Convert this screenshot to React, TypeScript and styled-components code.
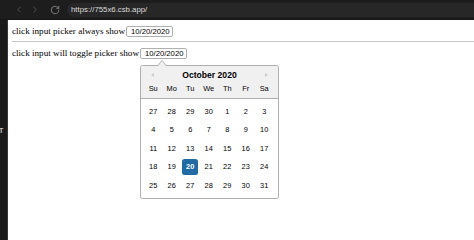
import React from 'react'
import styled, { createGlobalStyle } from 'styled-components'
import { ChevronLeft, ChevronRight, RotateCw } from 'lucide-react'

const weekDays = ['Su', 'Mo', 'Tu', 'We', 'Th', 'Fr', 'Sa']

const weeks = [
  [27, 28, 29, 30, 1, 2, 3],
  [4, 5, 6, 7, 8, 9, 10],
  [11, 12, 13, 14, 15, 16, 17],
  [18, 19, 20, 21, 22, 23, 24],
  [25, 26, 27, 28, 29, 30, 31],
]

const DateInput: React.FC = () => <Input readOnly value="10/20/2020" />

const Calendar: React.FC = () => (
  <Popper>
    <Arrow />
    <Header>
      <NavArrow $dir="prev" />
      <NavArrow $dir="next" />
      <MonthTitle>October 2020</MonthTitle>
      <Week>
        {weekDays.map(d => (
          <DayName key={d}>{d}</DayName>
        ))}
      </Week>
    </Header>
    <Month>
      {weeks.map((week, i) => (
        <Week key={i}>
          {week.map((day, j) => (
            <Day key={j} $selected={i === 3 && day === 20}>
              {day}
            </Day>
          ))}
        </Week>
      ))}
    </Month>
  </Popper>
)

const App: React.FC = () => (
  <>
    <GlobalStyle />
    <Frame>
      <TopBar>
        <NavButton $dim $space={6}>
          <ChevronLeft size={11} strokeWidth={2} />
        </NavButton>
        <NavButton $dim $space={10}>
          <ChevronRight size={11} strokeWidth={2} />
        </NavButton>
        <NavButton $space={7}>
          <RotateCw size={10} strokeWidth={2} />
        </NavButton>
        <Address>https://755x6.csb.app/</Address>
      </TopBar>
      <Body>
        <SideStrip>
          <Glyph>T</Glyph>
        </SideStrip>
        <Page>
          <Row>
            click input picker always show
            <DateInput />
          </Row>
          <Rule />
          <Row>
            click input will toggle picker show
            <Anchor>
              <DateInput />
              <Calendar />
            </Anchor>
          </Row>
        </Page>
      </Body>
    </Frame>
  </>
)

const GlobalStyle = createGlobalStyle`
  html, body {
    margin: 0;
    padding: 0;
    height: 100%;
  }
  body {
    overflow: hidden;
    background: #1c1c1c;
  }
  * {
    box-sizing: border-box;
  }
`

const Frame = styled.div`
  display: flex;
  flex-direction: column;
  width: 100vw;
  height: 100vh;
  min-height: 216px;
  overflow: hidden;
`

const TopBar = styled.div`
  display: flex;
  align-items: center;
  height: 20px;
  flex-shrink: 0;
  padding: 3px 0 3px 14px;
  background: #1d1d1d;
  border-bottom: 1px solid #161616;
`

const NavButton = styled.span<{ $dim?: boolean; $space: number }>`
  display: flex;
  align-items: center;
  justify-content: center;
  width: 10px;
  height: 14px;
  margin-right: ${p => p.$space}px;
  color: ${p => (p.$dim ? '#5c5c5c' : '#8c8c8c')};
`

const Address = styled.div`
  flex: 1;
  height: 14px;
  margin-right: -10px;
  padding-left: 4px;
  border-radius: 7px;
  background: #272727;
  color: #dcdcdc;
  font-family: 'Liberation Sans', Arial, sans-serif;
  font-size: 7.8px;
  line-height: 14px;
`

const Body = styled.div`
  display: flex;
  flex: 1;
  min-height: 0;
`

const SideStrip = styled.div`
  width: 8px;
  padding-top: 107px;
  background: #1b1b1b;
  border-right: 1px solid #383838;
  overflow: hidden;
`

const Glyph = styled.span`
  display: block;
  margin-left: -1px;
  color: #c8c8c8;
  font-family: 'Liberation Sans', Arial, sans-serif;
  font-size: 7px;
  font-weight: bold;
  line-height: 7px;
`

const Page = styled.div`
  flex: 1;
  padding: 5px 0 0 4px;
  background: #ffffff;
  color: #000000;
  font-family: 'Liberation Serif', 'Times New Roman', serif;
  font-size: 9.15px;
`

const Row = styled.div`
  display: flex;
  align-items: center;
  height: 12px;
  white-space: nowrap;
`

const Rule = styled.div`
  height: 1px;
  margin: 4px 0 5px;
  background: #c6c6c6;
`

const Anchor = styled.span`
  position: relative;
  display: inline-flex;
`

const Input = styled.input`
  width: 47px;
  height: 11px;
  margin: 0 0 0 1px;
  padding: 0 0 0 4px;
  border: 1px solid #b0b0b0;
  border-radius: 2px;
  background: #ffffff;
  color: #000000;
  font-family: 'Liberation Sans', Arial, sans-serif;
  font-size: 7.7px;
  line-height: 9px;
  outline: none;
`

const Popper = styled.div`
  position: absolute;
  top: 17px;
  left: 1px;
  width: 139px;
  border: 1px solid #aeaeae;
  border-radius: 2.5px;
  background: #ffffff;
  font-family: 'Liberation Sans', 'Helvetica Neue', Arial, sans-serif;
  font-size: 7.4px;
  color: #000000;
  z-index: 2;
`

const Arrow = styled.span`
  position: absolute;
  top: -6px;
  left: 16px;
  width: 0;
  height: 0;
  border: 5px solid transparent;
  border-top: 0;
  border-bottom: 6px solid #aeaeae;

  &::after {
    content: '';
    position: absolute;
    top: 1px;
    left: -4px;
    border: 4px solid transparent;
    border-top: 0;
    border-bottom: 5px solid #f0f0f0;
  }
`

const Header = styled.div`
  position: relative;
  padding: 4px 3px 0;
  background: #f0f0f0;
  border-bottom: 1px solid #aeaeae;
  border-radius: 2.5px 2.5px 0 0;
  text-align: center;
`

const NavArrow = styled.span<{ $dir: 'prev' | 'next' }>`
  position: absolute;
  top: 7px;
  ${p => (p.$dir === 'prev' ? 'left: 10px;' : 'right: 10px;')}
  width: 0;
  height: 0;
  border-top: 2.8px solid transparent;
  border-bottom: 2.8px solid transparent;
  ${p =>
    p.$dir === 'prev'
      ? 'border-right: 3.5px solid #cccccc;'
      : 'border-left: 3.5px solid #cccccc;'}
`

const MonthTitle = styled.div`
  height: 10px;
  font-size: 8.6px;
  font-weight: bold;
  line-height: 10px;
`

const Month = styled.div`
  padding: 3px;
`

const Week = styled.div`
  display: flex;
  white-space: nowrap;
`

const DayName = styled.div`
  width: 15.5px;
  margin: 1.5px;
  line-height: 15.5px;
  text-align: center;
  font-weight: normal;
`

const Day = styled.div<{ $selected?: boolean }>`
  width: 15.5px;
  height: 15.5px;
  margin: 1.5px;
  border-radius: 2.5px;
  line-height: 15.5px;
  text-align: center;
  background: ${p => (p.$selected ? '#216ba5' : 'transparent')};
  color: ${p => (p.$selected ? '#ffffff' : '#000000')};
  font-weight: ${p => (p.$selected ? 'bold' : 'normal')};
`

export default App
